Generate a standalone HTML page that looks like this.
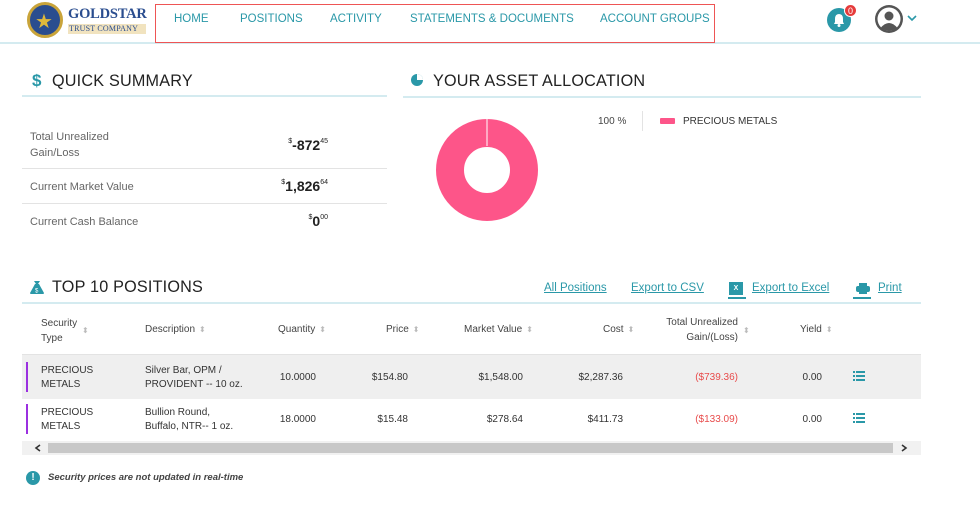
<!DOCTYPE html>
<html><head><meta charset="utf-8"><style>
*{margin:0;padding:0;box-sizing:border-box}
body{width:980px;height:523px;background:#fff;font-family:"Liberation Sans",sans-serif;color:#333;position:relative;overflow:hidden}
.abs{position:absolute}
.nav a{position:absolute;top:13px;font-size:11.5px;color:#2a98a8;text-decoration:none}
.h2{font-size:16.2px;color:#222;letter-spacing:.2px}
.line{height:2px;background:#d4ebf0}
.lbl{font-size:11px;color:#666;line-height:16px}
.val{position:absolute;width:120px;text-align:right;font-size:14px;font-weight:bold;color:#222;white-space:nowrap}
.val sup{font-size:7px;font-weight:normal;vertical-align:7px}
.th{font-size:10px;color:#444;line-height:15px;position:absolute}
.td{font-size:10px;color:#333;line-height:14px;position:absolute}
.s{color:#bbb;font-size:8px;margin-left:4px}
.r{text-align:right}
.lnk{position:absolute;top:282px;font-size:11.5px;color:#2a98a8;text-decoration:underline}
.red{color:#e84c4c}
</style></head><body>
<!-- header -->
<div class="abs" style="left:0;top:42px;width:980px;height:2px;background:#d4ebf0"></div>
<div class="abs" style="left:27px;top:2px;width:36px;height:36px;border-radius:50%;background:#2a4d8f;border:3px solid #c9a43a"></div>
<div class="abs" style="left:35px;top:9px;font-size:20px;color:#e0b93a">★</div>
<div class="abs" style="left:68px;top:6px;font-family:'Liberation Serif',serif;font-size:14.5px;font-weight:bold;color:#2a4d8f;letter-spacing:-.2px">GOLDSTAR</div>
<div class="abs" style="left:68px;top:24px;width:78px;height:10px;background:#f1e3bf"></div>
<div class="abs" style="left:69px;top:24px;font-family:'Liberation Serif',serif;font-size:8px;color:#2a4d8f;letter-spacing:.2px">TRUST COMPANY</div>
<div class="abs" style="left:155px;top:4px;width:560px;height:39px;border:1.5px solid #ee5555"></div>
<div class="nav">
<a style="left:174px">HOME</a><a style="left:240px">POSITIONS</a><a style="left:330px">ACTIVITY</a><a style="left:410px">STATEMENTS &amp; DOCUMENTS</a><a style="left:600px">ACCOUNT GROUPS</a>
</div>
<div class="abs" style="left:827px;top:8px;width:24px;height:24px;border-radius:50%;background:#2a98a8"></div>
<svg class="abs" style="left:833px;top:13px" width="12" height="14"><path d="M6 1 Q2 1 2 6 L2 9 L1 11 L11 11 L10 9 L10 6 Q10 1 6 1Z" fill="#fff"/><circle cx="6" cy="12.5" r="1.5" fill="#fff"/></svg>
<div class="abs" style="left:844px;top:4px;width:13px;height:13px;border-radius:50%;background:#e53b3b;color:#fff;font-size:9px;text-align:center;line-height:12px;border:1px solid #fff">0</div>
<svg class="abs" style="left:874px;top:4px" width="30" height="30" viewBox="0 0 30 30"><circle cx="15" cy="15" r="14" fill="#555"/><circle cx="15" cy="15" r="11.5" fill="#fff"/><circle cx="15" cy="12" r="4.5" fill="#555"/><path d="M6.5 24 Q15 14 23.5 24 Q15 29 6.5 24Z" fill="#555"/></svg>
<svg class="abs" style="left:907px;top:15px" width="10" height="7"><path d="M1 1 L5 5 L9 1" stroke="#2a98a8" stroke-width="1.6" fill="none"/></svg>

<!-- quick summary -->
<div class="abs" style="left:32px;top:71px;font-size:17px;font-weight:bold;color:#2a98a8">$</div>
<div class="abs h2" style="left:52px;top:72px">QUICK SUMMARY</div>
<div class="abs line" style="left:22px;top:95px;width:365px"></div>
<div class="abs lbl" style="left:30px;top:129px">Total Unrealized<br>Gain/Loss</div>
<div class="val" style="left:208px;top:137px"><sup>$</sup>-872<sup>45</sup></div>
<div class="abs" style="left:22px;top:168px;width:365px;height:1px;background:#e3e3e3"></div>
<div class="abs lbl" style="left:30px;top:179px">Current Market Value</div>
<div class="val" style="left:208px;top:178px"><sup>$</sup>1,826<sup>64</sup></div>
<div class="abs" style="left:22px;top:203px;width:365px;height:1px;background:#e3e3e3"></div>
<div class="abs lbl" style="left:30px;top:214px">Current Cash Balance</div>
<div class="val" style="left:208px;top:213px"><sup>$</sup>0<sup>00</sup></div>

<!-- asset allocation -->
<svg class="abs" style="left:410px;top:73px" width="14" height="14"><circle cx="7" cy="7" r="6" fill="#2a98a8"/><path d="M7 7 L7 1 A6 6 0 0 1 13 7Z" fill="#fff"/></svg>
<div class="abs h2" style="left:433px;top:72px">YOUR ASSET ALLOCATION</div>
<div class="abs line" style="left:403px;top:96px;width:518px"></div>
<svg class="abs" style="left:435px;top:118px" width="104" height="104"><circle cx="52" cy="52" r="37" fill="none" stroke="#fd5589" stroke-width="28"/><line x1="52" y1="1" x2="52" y2="28" stroke="#fff" stroke-width="1"/></svg>
<div class="abs" style="left:598px;top:116px;font-size:10px;color:#444">100 %</div>
<div class="abs" style="left:642px;top:111px;width:1px;height:20px;background:#e3e3e3"></div>
<div class="abs" style="left:660px;top:118px;width:15px;height:6px;background:#fd5589;border-radius:1px"></div>
<div class="abs" style="left:683px;top:116px;font-size:10px;color:#333">PRECIOUS METALS</div>

<!-- top 10 -->
<svg class="abs" style="left:29px;top:280px" width="16" height="15"><path d="M5 1 L11 1 L9 4 L7 4Z" fill="#2a98a8"/><path d="M6 4 L10 4 L15 13 Q15 14 14 14 L2 14 Q1 14 1 13Z" fill="#2a98a8"/><text x="6" y="12.5" font-size="6" fill="#fff" font-family="Liberation Sans">$</text></svg>
<div class="abs h2" style="left:52px;top:278px">TOP 10 POSITIONS</div>
<a class="lnk" style="left:544px">All Positions</a>
<a class="lnk" style="left:631px">Export to CSV</a>
<div class="abs" style="left:729px;top:282px;width:14px;height:13px;background:#2a98a8;color:#fff;font-size:7px;text-align:center;line-height:13px;font-weight:bold">X</div>
<div class="abs" style="left:728px;top:297px;width:18px;height:1.5px;background:#2a98a8"></div>
<a class="lnk" style="left:752px">Export to Excel</a>
<svg class="abs" style="left:855px;top:283px" width="16" height="12"><rect x="4" y="0" width="8" height="3" fill="#2a98a8"/><rect x="1" y="3" width="14" height="6" rx="2" fill="#2a98a8"/><rect x="4" y="7" width="8" height="4" fill="#2a98a8"/></svg>
<div class="abs" style="left:853px;top:297px;width:18px;height:1.5px;background:#2a98a8"></div>
<a class="lnk" style="left:878px">Print</a>
<div class="abs line" style="left:22px;top:302px;width:899px"></div>

<div class="th" style="left:41px;top:316px">Security<br>Type</div><div class="th" style="left:82px;top:323px;color:#bbb;font-size:8px">⬍</div>
<div class="th" style="left:145px;top:322px">Description<span class="s">⬍</span></div>
<div class="th" style="left:278px;top:322px">Quantity<span class="s">⬍</span></div>
<div class="th" style="left:386px;top:322px">Price<span class="s">⬍</span></div>
<div class="th" style="left:464px;top:322px">Market Value<span class="s">⬍</span></div>
<div class="th" style="left:603px;top:322px">Cost<span class="s">⬍</span></div>
<div class="th r" style="left:650px;top:315px;width:88px">Total Unrealized<br>Gain/(Loss)</div><div class="th" style="left:743px;top:323px;color:#bbb;font-size:8px">⬍</div>
<div class="th" style="left:800px;top:322px">Yield<span class="s">⬍</span></div>

<div class="abs" style="left:22px;top:355px;width:899px;height:44px;background:#efefef"></div>
<div class="abs" style="left:22px;top:354px;width:899px;height:1px;background:#e3e3e3"></div>
<div class="abs" style="left:26px;top:362px;width:2px;height:30px;background:#9b30e0"></div>
<div class="td" style="left:41px;top:364px">PRECIOUS<br>METALS</div>
<div class="td" style="left:145px;top:364px">Silver Bar, OPM /<br>PROVIDENT -- 10 oz.</div>
<div class="td r" style="left:236px;top:371px;width:80px">10.0000</div>
<div class="td r" style="left:328px;top:371px;width:80px">$154.80</div>
<div class="td r" style="left:433px;top:371px;width:90px">$1,548.00</div>
<div class="td r" style="left:533px;top:371px;width:90px">$2,287.36</div>
<div class="td r red" style="left:648px;top:371px;width:90px">($739.36)</div>
<div class="td r" style="left:762px;top:371px;width:60px">0.00</div>
<svg class="abs" style="left:853px;top:371px" width="12" height="10"><g fill="#2a98a8"><rect x="0" y="0" width="2" height="2"/><rect x="3" y="0" width="9" height="2"/><rect x="0" y="4" width="2" height="2"/><rect x="3" y="4" width="9" height="2"/><rect x="0" y="8" width="2" height="2"/><rect x="3" y="8" width="9" height="2"/></g></svg>

<div class="abs" style="left:26px;top:404px;width:2px;height:30px;background:#9b30e0"></div>
<div class="td" style="left:41px;top:406px">PRECIOUS<br>METALS</div>
<div class="td" style="left:145px;top:406px">Bullion Round,<br>Buffalo, NTR-- 1 oz.</div>
<div class="td r" style="left:236px;top:413px;width:80px">18.0000</div>
<div class="td r" style="left:328px;top:413px;width:80px">$15.48</div>
<div class="td r" style="left:433px;top:413px;width:90px">$278.64</div>
<div class="td r" style="left:533px;top:413px;width:90px">$411.73</div>
<div class="td r red" style="left:648px;top:413px;width:90px">($133.09)</div>
<div class="td r" style="left:762px;top:413px;width:60px">0.00</div>
<svg class="abs" style="left:853px;top:413px" width="12" height="10"><g fill="#2a98a8"><rect x="0" y="0" width="2" height="2"/><rect x="3" y="0" width="9" height="2"/><rect x="0" y="4" width="2" height="2"/><rect x="3" y="4" width="9" height="2"/><rect x="0" y="8" width="2" height="2"/><rect x="3" y="8" width="9" height="2"/></g></svg>

<div class="abs" style="left:22px;top:441px;width:899px;height:14px;background:#f1f1f1"></div>
<div class="abs" style="left:48px;top:443px;width:845px;height:10px;background:#c8c8c8"></div>
<svg class="abs" style="left:34px;top:444px" width="8" height="8"><path d="M6 1 L2 4 L6 7" stroke="#333" stroke-width="1.6" fill="none"/></svg>
<svg class="abs" style="left:900px;top:444px" width="8" height="8"><path d="M2 1 L6 4 L2 7" stroke="#333" stroke-width="1.6" fill="none"/></svg>

<div class="abs" style="left:26px;top:471px;width:14px;height:14px;border-radius:50%;background:#2a98a8;color:#fff;font-size:10px;font-weight:bold;text-align:center;line-height:14px">!</div>
<div class="abs" style="left:48px;top:472px;font-size:9.5px;font-style:italic;font-weight:bold;color:#444">Security prices are not updated in real-time</div>
</body></html>
